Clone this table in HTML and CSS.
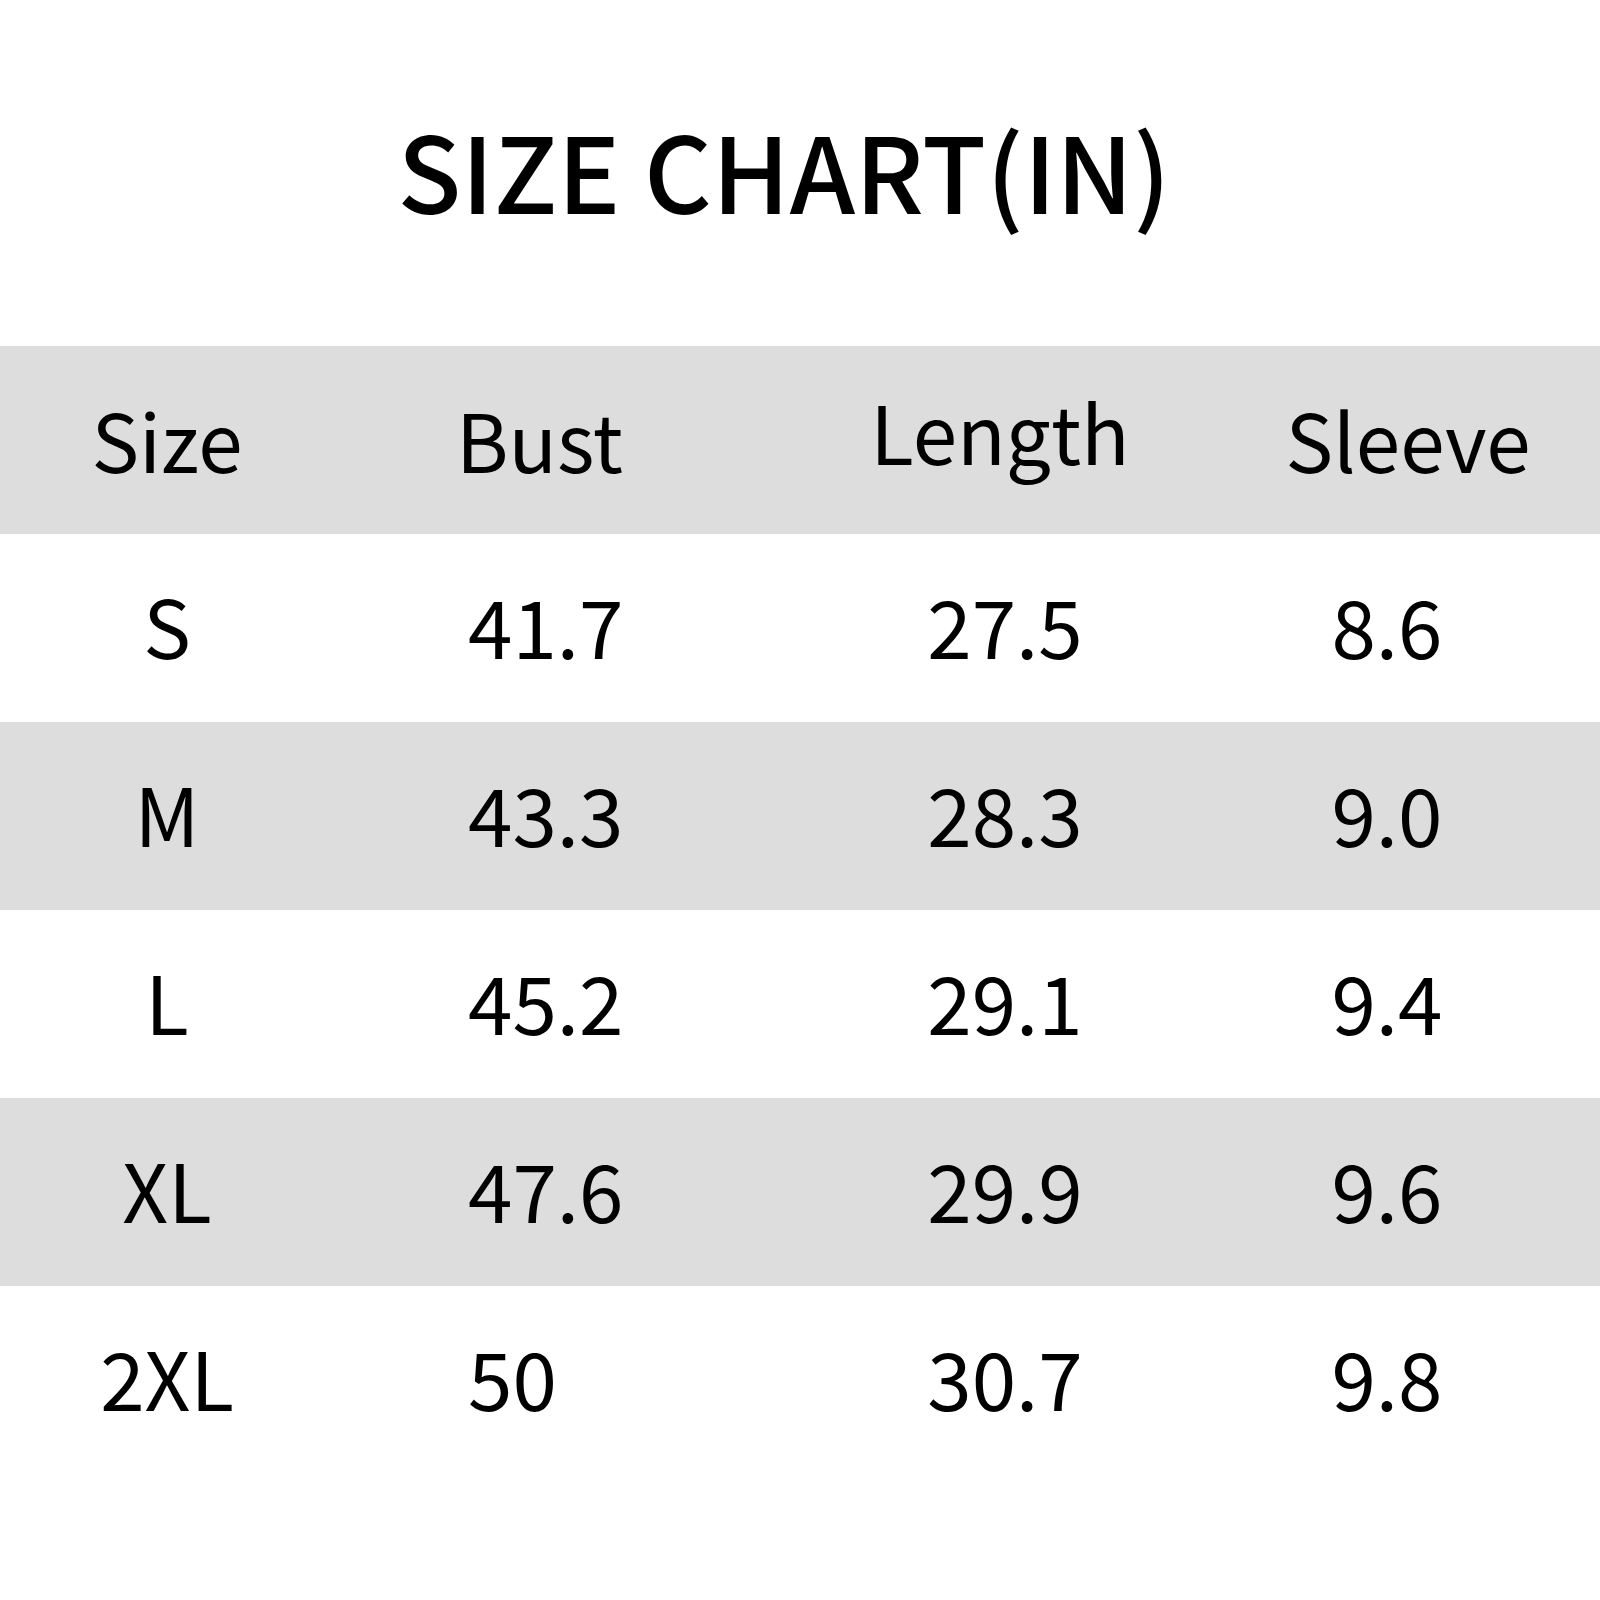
FILE: index.html
```html
<!DOCTYPE html>
<html>
<head>
<meta charset="utf-8">
<link rel="stylesheet" href="styles.css">
</head>
<body>
<div class="page">
  <header class="title-wrap">
    <h1 class="title">SIZE CHART(IN)</h1>
  </header>
  <div class="chart">
    <div class="row head">
      <div class="c c1">Size</div>
      <div class="c c2">Bust</div>
      <div class="c c3 hl">Length</div>
      <div class="c c4 hs">Sleeve</div>
    </div>
    <div class="row">
      <div class="c c1">S</div>
      <div class="c c2">41.7</div>
      <div class="c c3">27.5</div>
      <div class="c c4">8.6</div>
    </div>
    <div class="row shade">
      <div class="c c1">M</div>
      <div class="c c2">43.3</div>
      <div class="c c3">28.3</div>
      <div class="c c4">9.0</div>
    </div>
    <div class="row">
      <div class="c c1">L</div>
      <div class="c c2">45.2</div>
      <div class="c c3">29.1</div>
      <div class="c c4">9.4</div>
    </div>
    <div class="row shade">
      <div class="c c1">XL</div>
      <div class="c c2">47.6</div>
      <div class="c c3">29.9</div>
      <div class="c c4">9.6</div>
    </div>
    <div class="row">
      <div class="c c1">2XL</div>
      <div class="c c2">50</div>
      <div class="c c3">30.7</div>
      <div class="c c4">9.8</div>
    </div>
  </div>
</div>
</body>
</html>
```
FILE: styles.css
```css
html, body {
  margin: 0;
  padding: 0;
  background: #ffffff;
}
body {
  font-family: "Noto Sans CJK SC", "Noto Sans", sans-serif;
  color: #000000;
}
.page {
  width: 1600px;
}
.title-wrap {
  height: 346px;
  box-sizing: border-box;
  padding-right: 32px;
  display: flex;
  justify-content: center;
  align-items: flex-start;
}
.title {
  margin: 0;
  padding-top: 116px;
  font-size: 105px;
  font-weight: 500;
  line-height: 1;
  letter-spacing: 0;
}
.chart {
  display: flex;
  flex-direction: column;
}
.row {
  display: grid;
  grid-template-columns: 334px 476px 390px 374px;
  height: 188px;
  box-sizing: border-box;
  padding-bottom: 8px;
  align-items: center;
  font-size: 80px;
  line-height: 1;
}
.row.head {
  padding-bottom: 4px;
}
.row.head,
.row.shade {
  background: #dddddd;
}
.c {
  text-align: center;
  white-space: nowrap;
}
.c2 {
  text-align: left;
  padding-left: 134px;
}
.head .c2 {
  padding-left: 122px;
}
.head .hl {
  padding-right: 10px;
  padding-bottom: 16px;
}
.head .hs {
  padding-left: 42px;
}
```
